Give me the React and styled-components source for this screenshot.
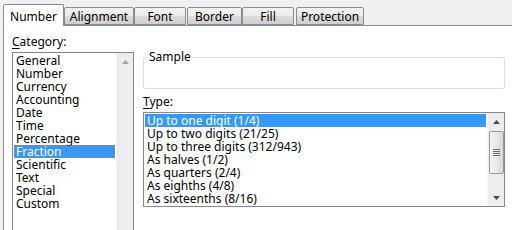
import React from "react";
import styled, { createGlobalStyle } from "styled-components";

const GlobalStyle = createGlobalStyle`
  html, body {
    margin: 0;
    padding: 0;
    background: #f0f0f0;
    overflow: hidden;
  }
  body {
    font-family: "Noto Sans", "Open Sans", sans-serif;
    font-size: 12px;
    color: #000;
  }
`;

const Window = styled.div`
  width: 512px;
  height: 230px;
  overflow: hidden;
`;

const TabStrip = styled.div`
  display: flex;
  align-items: flex-end;
  height: 25px;
  padding-left: 3px;
`;

const Tab = styled.div`
  box-sizing: border-box;
  position: relative;
  width: ${(p) => p.w}px;
  margin-left: ${(p) => p.gap || 0}px;
  height: ${(p) => (p.active ? 22 : 18)}px;
  margin-bottom: ${(p) => (p.active ? -1 : 0)}px;
  z-index: ${(p) => (p.active ? 2 : 1)};
  border: 1px solid #898c95;
  border-bottom: ${(p) => (p.active ? "none" : "1px solid #898c95")};
  border-radius: 2px 2px 0 0;
  background: ${(p) =>
    p.active ? "#fff" : "linear-gradient(#f2f2f2, #ebebeb 50%, #dddddd 51%, #cfcfcf)"};
  display: flex;
  justify-content: center;
  padding-top: ${(p) => (p.active ? 5 : 2)}px;
  line-height: 14px;
  white-space: nowrap;
`;

const Panel = styled.div`
  display: grid;
  grid-template-columns: 122px 362px;
  column-gap: 9px;
  align-items: start;
  margin-left: 3px;
  height: 220px;
  padding: 8px 0 0 8px;
  background: #fff;
  border-top: 1px solid #898c95;
  border-left: 1px solid #898c95;
`;

const Column = styled.div`
  display: flex;
  flex-direction: column;
`;

const Label = styled.div`
  height: 16px;
  line-height: 16px;
  margin-bottom: 2px;
  margin-top: ${(p) => p.top || 0}px;
  u {
    text-decoration: underline;
    text-underline-offset: 2px;
  }
`;

const ListBox = styled.div`
  box-sizing: border-box;
  display: flex;
  height: ${(p) => p.h}px;
  border: 1px solid #828790;
  background: #fff;
`;

const Items = styled.div`
  flex: 1;
  padding: 1px;
`;

const Item = styled.div`
  height: 13px;
  line-height: 13px;
  padding-left: 2px;
  white-space: nowrap;
  background: ${(p) => (p.selected ? "#3399ff" : "transparent")};
  color: ${(p) => (p.selected ? "#fff" : "#000")};
  outline: ${(p) => (p.focus ? "1px dotted #c97b33" : "none")};
  outline-offset: -1px;
`;

const ScrollBar = styled.div`
  width: 17px;
  display: flex;
  flex-direction: column;
  align-items: center;
  background: #ededed;
  border-left: 1px solid #f7f7f7;
  box-sizing: border-box;
`;

const Arrow = styled.div`
  height: 17px;
  width: 16px;
  display: flex;
  align-items: center;
  justify-content: center;
`;

const Thumb = styled.div`
  box-sizing: border-box;
  width: 15px;
  height: 43px;
  margin-top: 1px;
  border: 1px solid #979797;
  border-radius: 2px;
  background: linear-gradient(to right, #f4f4f4, #e8e8e8 50%, #d8d8d8);
  display: flex;
  align-items: center;
  justify-content: center;
`;

const Track = styled.div`
  flex: 1;
`;

const GroupBox = styled.fieldset`
  box-sizing: border-box;
  margin: 16px 0 0 0;
  padding: 0;
  height: 39px;
  border: 1px solid #d5dfe5;
  border-radius: 3px;
  legend {
    margin-left: 4px;
    padding: 0 1px;
    line-height: 14px;
    font-size: 12px;
  }
`;

const UpArrow = ({ color }) => (
  <svg width="7" height="4" viewBox="0 0 7 4">
    <path d="M3.5 0 L7 4 L0 4 Z" fill={color} />
  </svg>
);

const DownArrow = ({ color }) => (
  <svg width="7" height="4" viewBox="0 0 7 4">
    <path d="M0 0 L7 0 L3.5 4 Z" fill={color} />
  </svg>
);

const Grip = () => (
  <svg width="7" height="8" viewBox="0 0 7 8">
    {[0, 2, 4, 6].map((y) => (
      <rect key={y} x="0" y={y} width="7" height="1" fill="#6e6e6e" />
    ))}
  </svg>
);

const tabs = [
  { name: "Number", w: 61, active: true },
  { name: "Alignment", w: 70 },
  { name: "Font", w: 52 },
  { name: "Border", w: 55, gap: 1 },
  { name: "Fill", w: 52 },
  { name: "Protection", w: 68, gap: 2 },
];

const categories = [
  "General",
  "Number",
  "Currency",
  "Accounting",
  "Date",
  "Time",
  "Percentage",
  "Fraction",
  "Scientific",
  "Text",
  "Special",
  "Custom",
];

const types = [
  "Up to one digit (1/4)",
  "Up to two digits (21/25)",
  "Up to three digits (312/943)",
  "As halves (1/2)",
  "As quarters (2/4)",
  "As eighths (4/8)",
  "As sixteenths (8/16)",
];

export default function App() {
  return (
    <Window>
      <GlobalStyle />
      <TabStrip>
        {tabs.map((t) => (
          <Tab key={t.name} w={t.w} gap={t.gap} active={t.active}>
            {t.name}
          </Tab>
        ))}
      </TabStrip>
      <Panel>
        <Column>
          <Label>
            <u>C</u>ategory:
          </Label>
          <ListBox h={200}>
            <Items>
              {categories.map((c) => (
                <Item key={c} selected={c === "Fraction"} focus={c === "Fraction"}>
                  {c}
                </Item>
              ))}
            </Items>
            <ScrollBar>
              <Arrow>
                <UpArrow color="#a3a3a3" />
              </Arrow>
            </ScrollBar>
          </ListBox>
        </Column>
        <Column>
          <GroupBox>
            <legend>Sample</legend>
          </GroupBox>
          <Label top={5}>
            <u>T</u>ype:
          </Label>
          <ListBox h={95}>
            <Items>
              {types.map((t, i) => (
                <Item key={t} selected={i === 0}>
                  {t}
                </Item>
              ))}
            </Items>
            <ScrollBar>
              <Arrow>
                <UpArrow color="#4a4a4a" />
              </Arrow>
              <Thumb>
                <Grip />
              </Thumb>
              <Track />
              <Arrow>
                <DownArrow color="#4a4a4a" />
              </Arrow>
            </ScrollBar>
          </ListBox>
        </Column>
      </Panel>
    </Window>
  );
}
